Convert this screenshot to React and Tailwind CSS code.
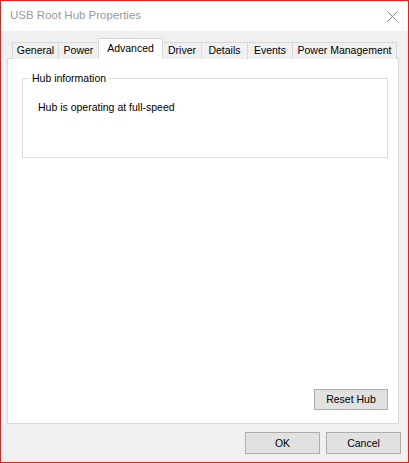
import React from 'react';

const tabs = [
    { label: "General", w: "w-[46px]", cls: "border-l" },
    { label: "Power", w: "w-[40px]", cls: "border-l" },
    { label: "Advanced", w: "w-[65px]", cls: "border-l border-r", selected: true },
    { label: "Driver", w: "w-[38px]", cls: "" },
    { label: "Details", w: "w-[46px]", cls: "border-l" },
    { label: "Events", w: "w-[45px]", cls: "border-l" },
    { label: "Power Management", w: "w-[105px]", cls: "border-l border-r" },
];

const Tab = ({ label, w, cls, selected }) => {
    if (selected) {
        return (
            <div className={`${w} h-[21px] ${cls} border-t border-[#d9d9d9] bg-white relative z-10 flex items-start justify-center pt-[3px]`}>
                {label}
            </div>
        );
    }
    return (
        <div className={`${w} h-[17px] ${cls} border-t border-[#d9d9d9] bg-[#f0f0f0] flex items-start justify-center pt-[1px]`}>
            {label}
        </div>
    );
};

const Button = ({ children, className }) => (
    <button className={`border border-[#adadad] bg-[#e1e1e1] text-black text-[10.5px] leading-none flex items-center justify-center ${className}`}>
        {children}
    </button>
);

const App = () => {
    return (
        <div className="w-[409px] h-[463px] bg-white" style={{ fontFamily: '"Liberation Sans", Arial, sans-serif' }}>
            <div className="w-[409px] h-[463px] border border-[#e3201b] bg-[#f0f0f0] flex flex-col">
                {/* Title bar */}
                <div className="h-[30px] bg-white flex items-center justify-between pl-[9px] pr-[10px]">
                    <span className="text-[11.5px] text-[#9a9a9a]">USB Root Hub Properties</span>
                    <svg width="11" height="11" viewBox="0 0 11 11">
                        <path d="M0.5 0.5 L10.5 10.5 M10.5 0.5 L0.5 10.5" stroke="#8a8a8a" strokeWidth="1" fill="none" />
                    </svg>
                </div>

                {/* Tabs */}
                <div className="pt-[7px] ml-[6px] mr-[9px] text-[10.5px] leading-[13px] text-black">
                    <div className="flex items-end h-[21px] pl-[5px]">
                        {tabs.map((t) => (
                            <Tab key={t.label} {...t} />
                        ))}
                    </div>
                    <div className="-mt-px h-[366px] border border-[#d9d9d9] bg-white flex flex-col">
                        {/* Group box */}
                        <div className="relative mt-[19px] ml-[14px] mr-[10px] h-[80px] border border-[#dcdcdc] pt-[22px] pl-[15px]">
                            <span className="absolute left-[7px] -top-[7px] px-[2px] bg-white">Hub information</span>
                            <span className="block">Hub is operating at full-speed</span>
                        </div>
                        <div className="flex-1" />
                        <div className="flex justify-end mr-[10px] mb-[13px]">
                            <Button className="w-[74px] h-[21px]">Reset Hub</Button>
                        </div>
                    </div>
                </div>

                {/* Footer */}
                <div className="flex justify-end gap-[6px] mt-[8px] pr-[7px]">
                    <Button className="w-[75px] h-[22px]">OK</Button>
                    <Button className="w-[75px] h-[22px]">Cancel</Button>
                </div>
            </div>
        </div>
    );
};

export default App;
